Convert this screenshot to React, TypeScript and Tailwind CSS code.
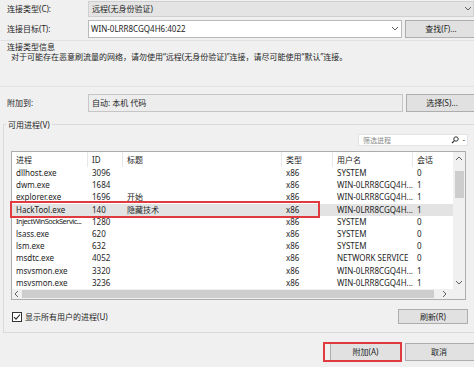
import React from 'react';

type Proc = {
    name: string;
    id: string;
    title?: string;
    user: string;
    session: string;
    selected?: boolean;
    long?: boolean;
};

const procs: Proc[] = [
    {name: 'dllhost.exe', id: '3096', user: 'SYSTEM', session: '0'},
    {name: 'dwm.exe', id: '1684', user: 'WIN-0LRR8CGQ4H...', session: '1'},
    {name: 'explorer.exe', id: '1696', title: '开始', user: 'WIN-0LRR8CGQ4H...', session: '1'},
    {name: 'HackTool.exe', id: '140', title: '隐藏技术', user: 'WIN-0LRR8CGQ4H...', session: '1', selected: true},
    {name: 'InjectWinSockServic...', id: '1280', user: 'SYSTEM', session: '0', long: true},
    {name: 'lsass.exe', id: '620', user: 'SYSTEM', session: '0'},
    {name: 'lsm.exe', id: '632', user: 'SYSTEM', session: '0'},
    {name: 'msdtc.exe', id: '4052', user: 'NETWORK SERVICE', session: '0'},
    {name: 'msvsmon.exe', id: '3320', user: 'WIN-0LRR8CGQ4H...', session: '1'},
    {name: 'msvsmon.exe', id: '3236', user: 'WIN-0LRR8CGQ4H...', session: '1'},
];

function Chevron({dir = 'down'}: { dir?: 'down' | 'up' | 'left' | 'right' }) {
    const pts = {
        down: '1,2 4,5 7,2',
        up: '1,5 4,2 7,5',
        left: '5,1 2,4 5,7',
        right: '3,1 6,4 3,7',
    }[dir];
    return (
        <svg width="8" height="8" viewBox="0 0 8 8" className="shrink-0">
            <polyline points={pts} fill="none" stroke="#606060" strokeWidth="1"/>
        </svg>
    );
}

function Button({children, className = ''}: { children: React.ReactNode; className?: string }) {
    return (
        <div className={`flex items-center justify-center bg-[#e1e1e1] border border-[#adadad] ${className}`}>
            {children}
        </div>
    );
}

export default function App() {
    return (
        <div className="w-[474px] h-[367px] overflow-hidden bg-[#f0f0f0] text-[8px] leading-none text-[#1e1e1e] font-['Noto_Sans','Noto_Sans_CJK_SC',sans-serif]">
            {/* 连接类型 */}
            <div className="flex items-center h-[16px] mt-[1px]">
                <div className="w-[88px] pl-[7px]">连接类型(C):</div>
                <div className="flex-1 h-full flex items-center justify-between bg-[#e4e4e4] border border-[#d0d0d0] pl-[3px] pr-[1px]">
                    <span>远程(无身份验证)</span>
                    <Chevron/>
                </div>
            </div>

            {/* 连接目标 */}
            <div className="flex items-center h-[18px] mt-[3px]">
                <div className="w-[88px] pl-[7px]">连接目标(T):</div>
                <div className="w-[314px] h-full flex items-center justify-between bg-white border border-[#b9b9b9] pl-[2px] pr-[2px]">
                    <span>WIN-0LRR8CGQ4H6:4022</span>
                    <Chevron/>
                </div>
                <Button className="ml-[3px] w-[80px] h-full shrink-0 -mr-[20px]">
                    <span className="pr-[8px]">查找(F)...</span>
                </Button>
            </div>

            {/* 连接类型信息 */}
            <div className="mt-[2px] h-[47px] border-y border-[#e2e2e2] pl-[7px] pt-[2px]">
                <div className="leading-[8px]">连接类型信息</div>
                <div className="pl-[4px] mt-[2px] leading-[8px]">
                    对于可能存在恶意刷流量的网络，请勿使用“远程(无身份验证)”连接，请尽可能使用“默认”连接。
                </div>
            </div>

            {/* 附加到 */}
            <div className="flex items-center h-[18px] mt-[7px]">
                <div className="w-[88px] pl-[7px]">附加到:</div>
                <div className="w-[315px] h-full flex items-center bg-[#ededed] border border-[#c6c6c6] pl-[3px]">
                    自动: 本机 代码
                </div>
                <Button className="ml-[3px] w-[80px] h-full shrink-0 -mr-[20px]">
                    <span className="pr-[8px]">选择(S)...</span>
                </Button>
            </div>

            {/* 可用进程 */}
            <div className="ml-[3px] mt-[12px] h-[209px] border-l border-y border-[#dadada] flex flex-col">
                <div className="-mt-[5px] ml-[2px] px-[2px] w-fit bg-[#f0f0f0] leading-[9px]">可用进程(V)</div>

                <div className="flex justify-end mt-[5px] pr-[6px]">
                    <div className="w-[110px] h-[12px] flex items-center bg-white border border-[#e3e3e3] pl-[4px] pr-[2px]">
                        <span className="flex-1 text-[#8a8a8a] text-[7px]">筛选进程</span>
                        <svg width="8" height="8" viewBox="0 0 8 8">
                            <circle cx="5" cy="3" r="2.2" fill="none" stroke="#333" strokeWidth="1"/>
                            <line x1="3.4" y1="4.6" x2="1" y2="7" stroke="#333" strokeWidth="1.2"/>
                        </svg>
                        <span className="ml-[3px] text-[#555]">-</span>
                    </div>
                </div>

                {/* 进程列表 */}
                <div className="relative ml-[7px] mt-[5px] w-[455px] h-[149px] bg-white border border-[#adadad] flex flex-col">
                    <div className="flex h-[137px]">
                        <div className="flex-1 flex flex-col">
                            <div className="flex h-[15px] items-center">
                                <div className="w-[76px] pl-[4px] h-full flex items-center border-r border-[#e8e8e8]">进程</div>
                                <div className="w-[35px] pl-[4px] h-full flex items-center border-r border-[#e8e8e8]">ID</div>
                                <div className="w-[159px] pl-[4px] h-full flex items-center border-r border-[#e8e8e8]">标题</div>
                                <div className="w-[51px] pl-[4px] h-full flex items-center border-r border-[#e8e8e8]">类型</div>
                                <div className="w-[80px] pl-[4px] h-full flex items-center border-r border-[#e8e8e8]">用户名</div>
                                <div className="flex-1 pl-[4px] h-full flex items-center">会话</div>
                            </div>
                            {procs.map((p, i) => (
                                <div key={`${p.name}-${i}`}
                                     className={`flex h-[12.2px] items-center ${p.selected ? 'bg-[#e3e3e3]' : ''}`}>
                                    <div className={`w-[76px] pl-[4px] whitespace-nowrap ${p.long ? 'text-[7.5px] tracking-[-0.5px]' : ''}`}>{p.name}</div>
                                    <div className="w-[35px] pl-[4px]">{p.id}</div>
                                    <div className="w-[159px] pl-[4px]">{p.title ?? ''}</div>
                                    <div className="w-[51px] pl-[4px]">x86</div>
                                    <div className="w-[80px] pl-[4px] whitespace-nowrap">{p.user}</div>
                                    <div className="flex-1 pl-[4px]">{p.session}</div>
                                </div>
                            ))}
                        </div>
                        {/* 垂直滚动条 */}
                        <div className="w-[12px] bg-[#f0f0f0] flex flex-col items-center">
                            <div className="h-[14px] flex items-center"><Chevron dir="up"/></div>
                            <div className="mt-[5px] w-[9px] h-[27px] bg-[#cdcdcd]"/>
                            <div className="flex-1"/>
                            <div className="h-[12px] flex items-center"><Chevron dir="down"/></div>
                        </div>
                    </div>
                    {/* 水平滚动条 */}
                    <div className="flex h-[10px] bg-[#f0f0f0]">
                        <div className="w-[10px] flex items-center justify-center"><Chevron dir="left"/></div>
                        <div className="w-[412px] my-[1px] bg-[#cdcdcd]"/>
                        <div className="flex-1 flex items-center justify-center"><Chevron dir="right"/></div>
                        <div className="w-[12px] bg-[#f0f0f0]"/>
                    </div>

                    {/* 标记 */}
                    <div className="absolute left-[-2px] top-[49px] w-[310px] h-[17px] border-2 border-[#e0393e]"/>
                </div>

                <div className="flex items-center mt-[9px] h-[15px]">
                    <div className="ml-[8px] w-[10px] h-[10px] border border-[#333] bg-white flex items-center justify-center">
                        <svg width="8" height="8" viewBox="0 0 8 8">
                            <polyline points="1,4 3,6.2 7,1.5" fill="none" stroke="#222" strokeWidth="1.1"/>
                        </svg>
                    </div>
                    <div className="ml-[3px] flex-1">显示所有用户的进程(U)</div>
                    <Button className="w-[70px] h-full mr-[6px]">刷新(R)</Button>
                </div>
            </div>

            {/* 底部按钮 */}
            <div className="flex items-center justify-end h-[18px] mt-[10px]">
                <div className="relative">
                    <Button className="w-[71px] h-[18px]">附加(A)</Button>
                    <div className="absolute -left-[7px] -top-[1px] w-[79px] h-[20px] border-2 border-[#e0393e]"/>
                </div>
                <Button className="ml-[4px] w-[80px] h-[18px] -mr-[11px]">
                    <span className="pr-[12px]">取消</span>
                </Button>
            </div>
        </div>
    );
}
